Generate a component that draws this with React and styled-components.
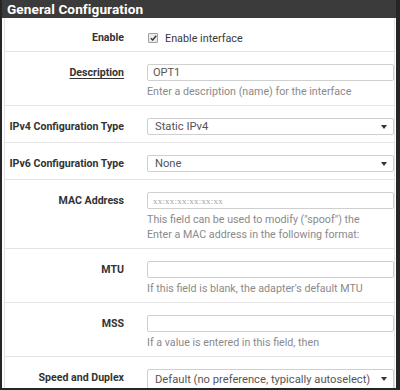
import React from "react";
import styled, { createGlobalStyle } from "styled-components";

const GlobalStyle = createGlobalStyle`
  html, body {
    margin: 0;
    padding: 0;
    background: #ffffff;
  }
  body {
    font-family: Roboto, "Liberation Sans", Arial, sans-serif;
  }
`;

const Frame = styled.div`
  width: 400px;
  height: 390px;
  box-sizing: border-box;
  border: 2px solid #252525;
  border-top: 0;
  border-right-width: 4px;
  background: #ffffff;
  overflow: hidden;
  display: flex;
  flex-direction: column;
`;

const Heading = styled.h2`
  margin: 0;
  height: 19px;
  padding: 0 5px;
  background: #3b3b3b;
  color: #ffffff;
  font-size: 13.6px;
  font-weight: 700;
  line-height: 18px;
  letter-spacing: 0.1px;
`;

const Panel = styled.div`
  margin: 0 1px 0 2px;
  border-left: 1px solid #e2e2e2;
  border-right: 1px solid #e2e2e2;
  flex: 1;
`;

const Row = styled.div`
  display: grid;
  grid-template-columns: 119px 1fr;
  column-gap: 23px;
  padding: ${(p) => (p.$check ? "13px" : "12px")} 0 ${(p) => (p.$tight ? "7px" : "6px")};
  border-bottom: 1px solid #e4e4e4;
`;

const Label = styled.div`
  text-align: right;
  font-size: 10.6px;
  font-weight: 700;
  color: #333333;
  line-height: ${(p) => (p.$check ? "14px" : "17px")};
  text-decoration: ${(p) => (p.$underline ? "underline" : "none")};
  text-underline-offset: 2px;
`;

const Field = styled.div`
  display: flex;
  flex-direction: column;
`;

const CheckLine = styled.label`
  display: flex;
  align-items: center;
  gap: 7px;
  height: 14px;
  font-size: 10.8px;
  color: #3a3a3a;
`;

const CheckBox = styled.span`
  width: 8px;
  height: 8px;
  margin-left: 1px;
  border: 1px solid #a0a0a0;
  border-radius: 1px;
  background: #ececec;
  display: flex;
  align-items: center;
  justify-content: center;
`;

const TextInput = styled.input`
  box-sizing: border-box;
  width: 100%;
  height: 17px;
  margin: 0;
  padding: 0 5px;
  border: 1px solid #cfcfcf;
  border-radius: 2px;
  font-family: Roboto, "Liberation Sans", Arial, sans-serif;
  font-size: 11px;
  color: #555555;
  outline: none;
  &::placeholder {
    font-family: "Liberation Serif", "Times New Roman", serif;
    font-size: 9px;
    color: #a5a5a5;
    letter-spacing: 0.2px;
  }
`;

const SelectBox = styled.div`
  box-sizing: border-box;
  height: ${(p) => (p.$tall ? "20px" : "17px")};
  padding: 0 6px 0 7px;
  border: 1px solid #cfcfcf;
  border-radius: 2px;
  display: flex;
  align-items: center;
  justify-content: space-between;
  font-size: 11.2px;
  color: #555555;
`;

const Arrow = styled.span`
  width: 0;
  height: 0;
  border-left: 3px solid transparent;
  border-right: 3px solid transparent;
  border-top: 4px solid #333333;
`;

const Help = styled.div`
  margin-top: 3px;
  font-size: 10.7px;
  line-height: 15px;
  color: #8a8a8a;
  white-space: nowrap;
`;

function Select({ value, tall }) {
  return (
    <SelectBox $tall={tall}>
      <span>{value}</span>
      <Arrow />
    </SelectBox>
  );
}

export default function App() {
  return (
    <>
      <GlobalStyle />
      <Frame>
        <Heading>General Configuration</Heading>
        <Panel>
          <Row $check>
            <Label $check>Enable</Label>
            <Field>
              <CheckLine>
                <CheckBox>
                  <svg width="7" height="6" viewBox="0 0 7 6">
                    <path d="M0.8 3.2 L2.7 5 L6.2 0.8" fill="none" stroke="#333" strokeWidth="1.4" />
                  </svg>
                </CheckBox>
                Enable interface
              </CheckLine>
            </Field>
          </Row>
          <Row>
            <Label $underline>Description</Label>
            <Field>
              <TextInput defaultValue="OPT1" />
              <Help>Enter a description (name) for the interface</Help>
            </Field>
          </Row>
          <Row $tight>
            <Label>IPv4 Configuration Type</Label>
            <Field>
              <Select value="Static IPv4" />
            </Field>
          </Row>
          <Row $tight>
            <Label>IPv6 Configuration Type</Label>
            <Field>
              <Select value="None" />
            </Field>
          </Row>
          <Row>
            <Label>MAC Address</Label>
            <Field>
              <TextInput placeholder="xx:xx:xx:xx:xx:xx" />
              <Help>
                This field can be used to modify ("spoof") the
                <br />
                Enter a MAC address in the following format:
              </Help>
            </Field>
          </Row>
          <Row>
            <Label>MTU</Label>
            <Field>
              <TextInput />
              <Help>If this field is blank, the adapter's default MTU</Help>
            </Field>
          </Row>
          <Row>
            <Label>MSS</Label>
            <Field>
              <TextInput />
              <Help>If a value is entered in this field, then</Help>
            </Field>
          </Row>
          <Row $tight>
            <Label>Speed and Duplex</Label>
            <Field>
              <Select value="Default (no preference, typically autoselect)" tall />
            </Field>
          </Row>
        </Panel>
      </Frame>
    </>
  );
}
